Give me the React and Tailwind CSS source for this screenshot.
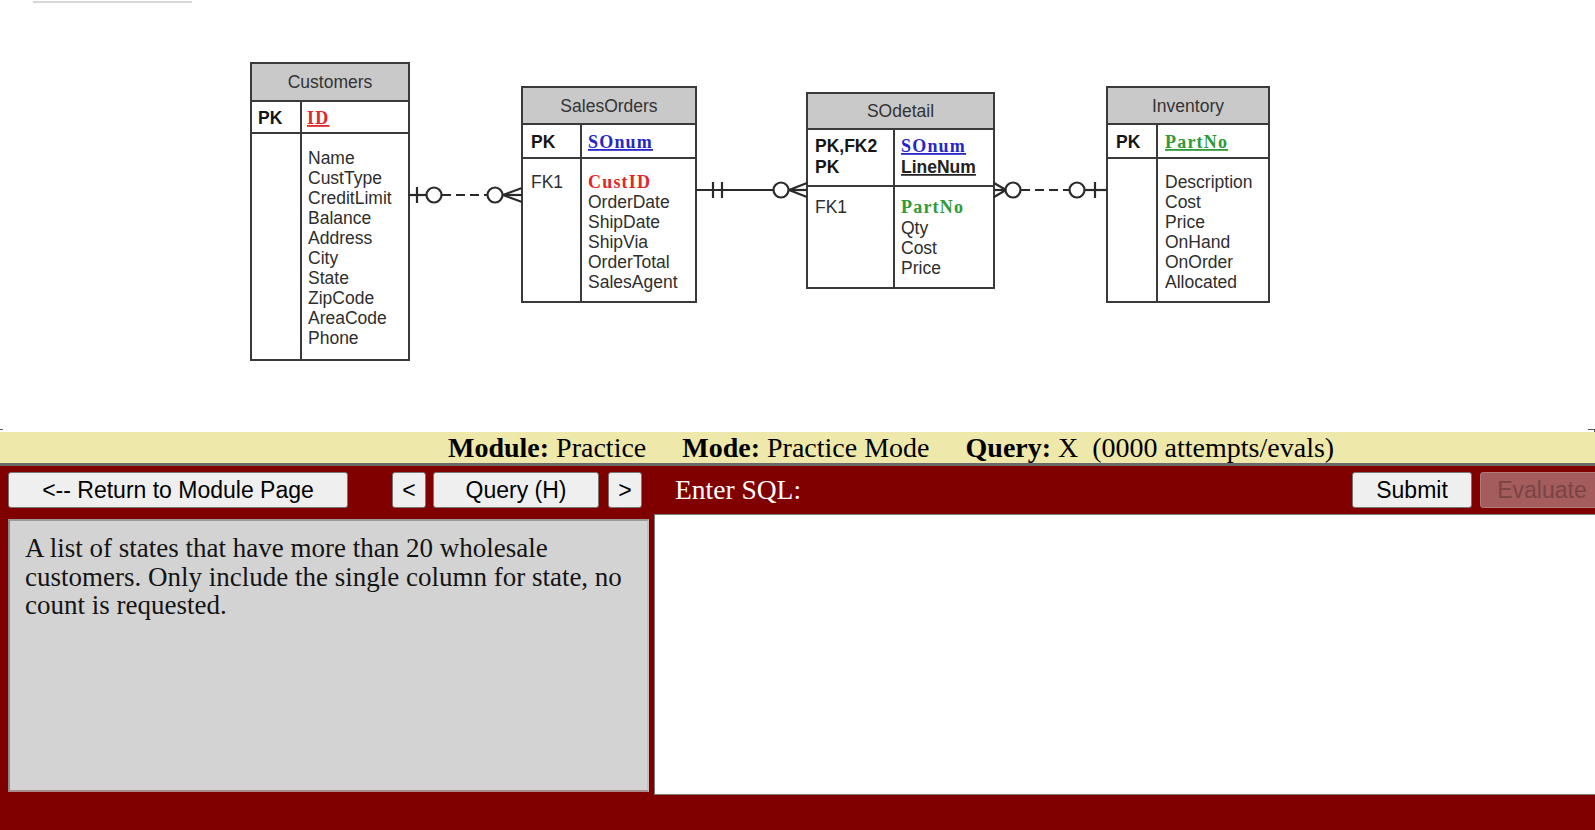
const sans = '"Liberation Sans", Arial, sans-serif';
const serif = '"Liberation Serif", "Times New Roman", serif';

// plain field text in the diagram
function T({ x, y, children, bold }) {
  return (
    <text x={x} y={y} fontFamily={sans} fontSize="17.5" fontWeight={bold ? 700 : 400} fill={bold ? "#151515" : "#2e2e2e"}>
      {children}
    </text>
  );
}

// serif key names (ID, SOnum, CustID, PartNo)
function K({ x, y, color, under, children }) {
  return (
    <text
      x={x}
      y={y}
      fontFamily={serif}
      fontSize="18"
      fontWeight="700"
      letterSpacing="1.2"
      fill={color}
      style={under ? { textDecoration: "underline" } : undefined}
    >
      {children}
    </text>
  );
}

function Entity({ x, y, right, bottom, head, pk, col, title, children }) {
  return (
    <g>
      <rect x={x} y={y} width={right - x} height={head - y} fill="#c9c9c9" />
      <rect x={x} y={y} width={right - x} height={bottom - y} fill="none" stroke="#3a3a3a" strokeWidth="2" />
      <line x1={x} x2={right} y1={head} y2={head} stroke="#3a3a3a" strokeWidth="2" />
      <line x1={x} x2={right} y1={pk} y2={pk} stroke="#3a3a3a" strokeWidth="2" />
      <line x1={col} x2={col} y1={head} y2={bottom} stroke="#3a3a3a" strokeWidth="2" />
      <text x={(x + right) / 2} y={(y + head) / 2 + 6} textAnchor="middle" fontFamily={sans} fontSize="17.5" fill="#333">
        {title}
      </text>
      {children}
    </g>
  );
}

function Diagram() {
  const stroke = { stroke: "#2a2a2a", strokeWidth: 2.2, fill: "none" };
  return (
    <svg width="1300" height="426" viewBox="0 3 1300 426" className="block shrink-0">
      <Entity x={251} y={63} right={409} bottom={360} head={101} pk={133} col={301} title="Customers">
        <T x={258} y={124} bold>PK</T>
        <K x={307} y={124} color="#e3262b" under>ID</K>
        {["Name", "CustType", "CreditLimit", "Balance", "Address", "City", "State", "ZipCode", "AreaCode", "Phone"].map((f, i) => (
          <T key={f} x={308} y={164 + i * 20}>{f}</T>
        ))}
      </Entity>

      <Entity x={522} y={87} right={696} bottom={302} head={124} pk={158} col={581} title="SalesOrders">
        <T x={531} y={148} bold>PK</T>
        <K x={588} y={148} color="#2626c8" under>SOnum</K>
        <T x={531} y={188}>FK1</T>
        <K x={588} y={188} color="#e3262b">CustID</K>
        {["OrderDate", "ShipDate", "ShipVia", "OrderTotal", "SalesAgent"].map((f, i) => (
          <T key={f} x={588} y={208 + i * 20}>{f}</T>
        ))}
      </Entity>

      <Entity x={807} y={93} right={994} bottom={288} head={129} pk={186} col={894} title="SOdetail">
        <T x={815} y={152} bold>PK,FK2</T>
        <T x={815} y={173} bold>PK</T>
        <K x={901} y={152} color="#2626c8" under>SOnum</K>
        <text x={901} y={173} fontFamily={sans} fontSize="17.5" fontWeight="700" fill="#222" style={{ textDecoration: "underline" }}>
          LineNum
        </text>
        <T x={815} y={213}>FK1</T>
        <K x={901} y={213} color="#2f9a3a">PartNo</K>
        {["Qty", "Cost", "Price"].map((f, i) => (
          <T key={f} x={901} y={234 + i * 20}>{f}</T>
        ))}
      </Entity>

      <Entity x={1107} y={87} right={1269} bottom={302} head={124} pk={158} col={1157} title="Inventory">
        <T x={1116} y={148} bold>PK</T>
        <K x={1165} y={148} color="#2f9a3a" under>PartNo</K>
        {["Description", "Cost", "Price", "OnHand", "OnOrder", "Allocated"].map((f, i) => (
          <T key={f} x={1165} y={188 + i * 20}>{f}</T>
        ))}
      </Entity>

      {/* Customers -> SalesOrders */}
      <g {...stroke}>
        <line x1="409" y1="195" x2="426" y2="195" />
        <line x1="417" y1="187" x2="417" y2="203" />
        <circle cx="434" cy="195" r="7.5" />
        <line x1="442" y1="195" x2="487" y2="195" strokeDasharray="9 5" />
        <circle cx="495" cy="195" r="7.5" />
        <line x1="502" y1="195" x2="522" y2="195" />
        <line x1="503" y1="195" x2="522" y2="188" />
        <line x1="503" y1="195" x2="522" y2="202" />
      </g>

      {/* SalesOrders -> SOdetail */}
      <g {...stroke}>
        <line x1="696" y1="190" x2="773" y2="190" />
        <line x1="713" y1="182" x2="713" y2="198" />
        <line x1="722" y1="182" x2="722" y2="198" />
        <circle cx="781" cy="190" r="7.5" />
        <line x1="788" y1="190" x2="807" y2="190" />
        <line x1="789" y1="190" x2="807" y2="183" />
        <line x1="789" y1="190" x2="807" y2="197" />
      </g>

      {/* SOdetail -> Inventory */}
      <g {...stroke}>
        <line x1="994" y1="190" x2="1006" y2="190" />
        <line x1="1006" y1="190" x2="994" y2="183" />
        <line x1="1006" y1="190" x2="994" y2="197" />
        <circle cx="1013" cy="190" r="7.5" />
        <line x1="1021" y1="190" x2="1069" y2="190" strokeDasharray="9 5" />
        <circle cx="1077" cy="190" r="7.5" />
        <line x1="1085" y1="190" x2="1107" y2="190" />
        <line x1="1095" y1="182" x2="1095" y2="198" />
      </g>
    </svg>
  );
}

function Btn({ className, children }) {
  return (
    <button
      className={"h-[36px] shrink-0 rounded-[3px] border border-[#767676] bg-[#efefef] text-[23px] leading-none text-black " + className}
      style={{ fontFamily: sans }}
    >
      {children}
    </button>
  );
}

export default function App() {
  return (
    <div className="w-[1595px] h-[830px] overflow-hidden bg-white flex flex-col">
      <div className="ml-[33px] mt-px w-[159px] h-[2px] bg-[#d6d6d6] shrink-0" />
      <Diagram />
      <div className="flex justify-between h-[3px] shrink-0">
        <div className="w-[3px] h-px bg-[#555]" />
        <div className="w-[7px] h-[3px] border-t border-r border-[#555]" />
      </div>

      {/* status bar */}
      <div
        className="h-[34px] shrink-0 bg-[#eee8aa] border-b-[3px] border-[#696969] pl-[448px] text-[28px] leading-[31px] text-black whitespace-pre flex"
        style={{ fontFamily: serif }}
      >
        <span><b>Module:</b> Practice</span>
        <span className="ml-[36px]"><b>Mode:</b> Practice Mode</span>
        <span className="ml-[36px]"><b>Query:</b> X  (0000 attempts/evals)</span>
      </div>

      <div className="flex-1 bg-[#800000] flex pl-[8px]">
        <div className="w-[641px] shrink-0 pt-[6px] flex flex-col">
          <div className="flex items-center">
            <Btn className="w-[340px]">&lt;-- Return to Module Page</Btn>
            <Btn className="w-[34px] ml-[44px]">&lt;</Btn>
            <Btn className="w-[166px] ml-[7px]">Query (H)</Btn>
            <Btn className="w-[34px] ml-[9px]">&gt;</Btn>
          </div>
          <div
            className="mt-[11px] h-[273px] bg-[#d3d3d3] border-2 border-t-[#9a9a9a] border-l-[#8c8c8c] border-r-[#c9bcbc] border-b-[#a88c8c] pt-[13px] pl-[15px] pr-[10px] text-[27px] leading-[28.5px] text-[#141414]"
            style={{ fontFamily: serif }}
          >
            A list of states that have more than 20 wholesale customers. Only include the single column for state, no count is requested.
          </div>
        </div>

        <div className="ml-[5px] w-[950px] shrink-0 pt-[6px] flex flex-col">
          <div className="flex items-center h-[36px]">
            <span className="ml-[21px] text-white text-[27.5px] leading-[36px]" style={{ fontFamily: serif }}>
              Enter SQL:
            </span>
            <div className="flex-1" />
            <Btn className="w-[120px]">Submit</Btn>
            <button
              disabled
              className="ml-[8px] h-[36px] w-[124px] shrink-0 rounded-[3px] border border-[#b07a7a] bg-[#a45c5c] text-[23px] leading-none text-[#7a4444]"
              style={{ fontFamily: sans }}
            >
              Evaluate
            </button>
          </div>
          <textarea
            readOnly
            className="mt-[6px] h-[281px] w-full resize-none border border-[#7a7a7a] bg-white outline-none"
          />
        </div>
      </div>
    </div>
  );
}
